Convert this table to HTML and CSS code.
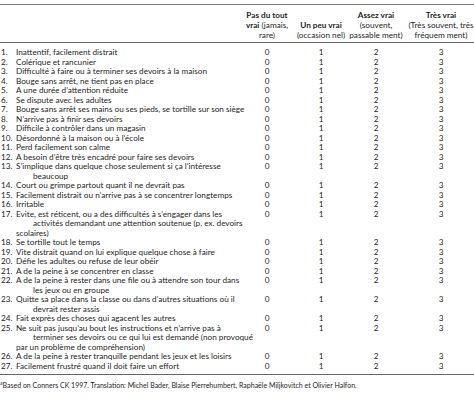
FILE: index.html
```html
<!DOCTYPE html>
<html lang="fr">
<head>
<meta charset="utf-8">
<title>Échelle de Conners</title>
<link rel="stylesheet" href="styles.css">
</head>
<body>
<div class="page">
<table class="scale">
<colgroup>
<col class="c-num"><col class="c-text"><col class="c-v1"><col class="c-v2"><col class="c-v3"><col class="c-v4">
</colgroup>
<thead>
<tr>
<th class="h-num"></th>
<th class="h-text"></th>
<th><b>Pas du tout</b><br><b>vrai</b> (jamais,<br>rare)</th>
<th><b>Un peu vrai</b><br>(occasion nel)</th>
<th><b>Assez vrai</b><br>(souvent,<br>passable ment)</th>
<th><b>Très vrai</b><br>(Très souvent, très<br>fréquem ment)</th>
</tr>
</thead>
<tbody>
<tr class="first"><td class="n">1.</td><td class="t">Inattentif, facilement distrait</td><td>0</td><td>1</td><td>2</td><td>3</td></tr>
<tr><td class="n">2.</td><td class="t">Colérique et rancunier</td><td>0</td><td>1</td><td>2</td><td>3</td></tr>
<tr><td class="n">3.</td><td class="t">Difficulté à faire ou à terminer ses devoirs à la maison</td><td>0</td><td>1</td><td>2</td><td>3</td></tr>
<tr><td class="n">4.</td><td class="t">Bouge sans arrêt, ne tient pas en place</td><td>0</td><td>1</td><td>2</td><td>3</td></tr>
<tr><td class="n">5.</td><td class="t">A une durée d’attention réduite</td><td>0</td><td>1</td><td>2</td><td>3</td></tr>
<tr><td class="n">6.</td><td class="t">Se dispute avec les adultes</td><td>0</td><td>1</td><td>2</td><td>3</td></tr>
<tr><td class="n">7.</td><td class="t">Bouge sans arrêt ses mains ou ses pieds, se tortille sur son siège</td><td>0</td><td>1</td><td>2</td><td>3</td></tr>
<tr><td class="n">8.</td><td class="t">N’arrive pas à finir ses devoirs</td><td>0</td><td>1</td><td>2</td><td>3</td></tr>
<tr><td class="n">9.</td><td class="t">Difficile à contrôler dans un magasin</td><td>0</td><td>1</td><td>2</td><td>3</td></tr>
<tr><td class="n">10.</td><td class="t">Désordonné à la maison ou à l’école</td><td>0</td><td>1</td><td>2</td><td>3</td></tr>
<tr><td class="n">11.</td><td class="t">Perd facilement son calme</td><td>0</td><td>1</td><td>2</td><td>3</td></tr>
<tr><td class="n">12.</td><td class="t">A besoin d’être très encadré pour faire ses devoirs</td><td>0</td><td>1</td><td>2</td><td>3</td></tr>
<tr><td class="n">13.</td><td class="t"><span class="ln">S’implique dans quelque chose seulement si ça l’intéresse</span><span class="ln ind">beaucoup</span></td><td>0</td><td>1</td><td>2</td><td>3</td></tr>
<tr><td class="n">14.</td><td class="t">Court ou grimpe partout quant il ne devrait pas</td><td>0</td><td>1</td><td>2</td><td>3</td></tr>
<tr><td class="n">15.</td><td class="t">Facilement distrait ou n’arrive pas à se concentrer longtemps</td><td>0</td><td>1</td><td>2</td><td>3</td></tr>
<tr><td class="n">16.</td><td class="t">Irritable</td><td>0</td><td>1</td><td>2</td><td>3</td></tr>
<tr><td class="n">17.</td><td class="t"><span class="ln">Evite, est réticent, ou a des difficultés à s’engager dans les</span><span class="ln ind">activités demandant une attention soutenue (p. ex. devoirs</span><span class="ln">scolaires)</span></td><td>0</td><td>1</td><td>2</td><td>3</td></tr>
<tr><td class="n">18.</td><td class="t">Se tortille tout le temps</td><td>0</td><td>1</td><td>2</td><td>3</td></tr>
<tr><td class="n">19.</td><td class="t">Vite distrait quand on lui explique quelque chose à faire</td><td>0</td><td>1</td><td>2</td><td>3</td></tr>
<tr><td class="n">20.</td><td class="t">Défie les adultes ou refuse de leur obéir</td><td>0</td><td>1</td><td>2</td><td>3</td></tr>
<tr><td class="n">21.</td><td class="t">A de la peine à se concentrer en classe</td><td>0</td><td>1</td><td>2</td><td>3</td></tr>
<tr><td class="n">22.</td><td class="t"><span class="ln">A de la peine à rester dans une file ou à attendre son tour dans</span><span class="ln ind">les jeux ou en groupe</span></td><td>0</td><td>1</td><td>2</td><td>3</td></tr>
<tr><td class="n">23.</td><td class="t"><span class="ln">Quitte sa place dans la classe ou dans d’autres situations où il</span><span class="ln ind">devrait rester assis</span></td><td>0</td><td>1</td><td>2</td><td>3</td></tr>
<tr><td class="n">24.</td><td class="t">Fait exprès des choses qui agacent les autres</td><td>0</td><td>1</td><td>2</td><td>3</td></tr>
<tr><td class="n">25.</td><td class="t"><span class="ln">Ne suit pas jusqu’au bout les instructions et n’arrive pas à</span><span class="ln ind">terminer ses devoirs ou ce qui lui est demandé (non provoqué</span><span class="ln">par un problème de compréhension)</span></td><td>0</td><td>1</td><td>2</td><td>3</td></tr>
<tr><td class="n">26.</td><td class="t">A de la peine à rester tranquille pendant les jeux et les loisirs</td><td>0</td><td>1</td><td>2</td><td>3</td></tr>
<tr class="last"><td class="n">27.</td><td class="t">Facilement frustré quand il doit faire un effort</td><td>0</td><td>1</td><td>2</td><td>3</td></tr>
</tbody>
</table>
<p class="note"><sup>a</sup>Based on Conners CK 1997. Translation: Michel Bader, Blaise Pierrehumbert, Raphaële Miljkovitch et Olivier Halfon.</p>
</div>
</body>
</html>
```
FILE: styles.css
```css
html, body {
  margin: 0;
  padding: 0;
  background: #fff;
  overflow: hidden;
}
body {
  font-family: Lato, "Open Sans", sans-serif;
  color: #262626;
  font-size: 8.2px;
}
.page {
  width: 478px;
  padding-top: 4px;
}
.scale {
  width: 478px;
  table-layout: fixed;
  border-collapse: collapse;
  border-top: 1.5px solid #7a7a7a;
  border-bottom: 1px solid #666;
}
.c-num { width: 16px; }
.c-text { width: 224px; }
.c-v1 { width: 54px; }
.c-v2 { width: 54px; }
.c-v3 { width: 56px; }
.c-v4 { width: 74px; }
thead th {
  font-weight: normal;
  text-align: center;
  vertical-align: bottom;
  line-height: 10px;
  padding: 5px 0 2px;
  border-bottom: 1px solid #666;
  white-space: nowrap;
}
thead b { font-weight: 700; }
tbody td {
  padding: 0;
  line-height: 9.5px;
  vertical-align: top;
  text-align: center;
  white-space: nowrap;
}
tbody td.n, tbody td.t { text-align: left; }
tbody td.n { padding-left: 1px; }
tbody tr.first td { padding-top: 5px; }
tbody tr.last td { padding-bottom: 3px; }
.ln { display: block; }
.ln.ind { padding-left: 17px; }
.note {
  margin: 5px 0 0;
  font-size: 7px;
  line-height: 10px;
  white-space: nowrap;
}
.note sup {
  font-size: 5px;
  vertical-align: top;
  line-height: 6px;
}
```
